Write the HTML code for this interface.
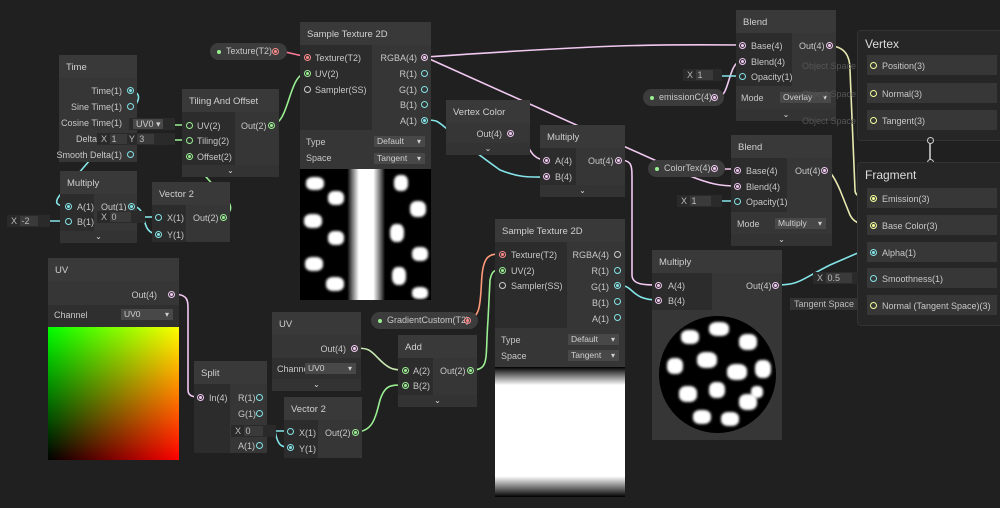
<!DOCTYPE html>
<html><head><meta charset="utf-8"><style>
*{margin:0;padding:0;box-sizing:border-box}
body{width:1000px;height:508px;background:#202020;position:relative;overflow:hidden;font-family:"Liberation Sans",sans-serif;font-size:9px;color:#c8c8c8}
.r{position:absolute}
.h{position:absolute;background:#393939;color:#d0d0d0;font-size:9.5px;padding:7px 0 0 7px;height:23px}
.b{position:absolute;background:#2c2c2c}
.o{position:absolute;background:#363636}
.t{position:absolute;white-space:nowrap;line-height:10px}
.p{position:absolute;width:7px;height:7px;border-radius:50%;border:1px solid #8ad;}
.p.f::after{content:"";position:absolute;left:1px;top:1px;width:3px;height:3px;border-radius:50%;background:currentColor}
.c{border-color:#84e4e7;color:#84e4e7}.g{border-color:#9aef92;color:#9aef92}.v{border-color:#f0c8f0;color:#f0c8f0}.y{border-color:#f6ff9a;color:#f6ff9a}.rd{border-color:#ff8b8b;color:#ff8b8b}.w{border-color:#ccc;color:#ccc}
.fld{position:absolute;background:#2a2a2a;height:12px;font-size:9px;line-height:12px;padding-left:4px;color:#bbb}
.in{position:absolute;background:#3c3c3c;height:10px;line-height:10px;padding-left:3px;color:#ccc}
.dd{position:absolute;background:#484848;height:11px;line-height:11px;padding-left:3px;color:#d0d0d0;font-size:8.5px}
.dd::after{content:"▾";position:absolute;right:4px;top:0;font-size:8px}
.pill{position:absolute;background:#3c3c3c;border-radius:9px;height:17px;line-height:17px;padding-left:16px;color:#c8c8c8}
.pill::before{content:"";position:absolute;left:7px;top:7px;width:4px;height:4px;border-radius:50%;background:#9aef92}
.chev{position:absolute;background:#333;height:12px;text-align:center;font-size:8px;line-height:12px;color:#ddd}
.blk{position:absolute;background:#262626;border:1px solid #333;border-radius:4px}
.row{position:absolute;background:#373737;height:20px}
.s{position:absolute;background:#fff;border-radius:40%;filter:blur(1.2px)}
</style></head><body>

<svg class="r" style="left:0;top:0" width="1000" height="508" fill="none" stroke-width="1.6">
<path d="M281 51 L307 57" stroke="#ff7a9a"/>
<path d="M271 125 C290 125 288 73 307 73" stroke="#9aef92"/>
<path d="M130 90 C150 95 130 110 120 125 L60 195 C52 205 60 206 68 206" stroke="#84e4e7"/>
<path d="M131 206 C150 206 138 234 158 234" stroke="#84e4e7"/>
<path d="M50 221 L68 221" stroke="#84e4e7"/>
<path d="M145 217 L158 217" stroke="#84e4e7"/>
<path d="M224 217 C240 205 225 200 200 170 C185 160 183 156 189 156" stroke="#9aef92"/>
<path d="M172 125 L189 125 M172 140 L189 140" stroke="#9aef92"/>
<path d="M425 57 C600 45 650 44 742 45" stroke="#f0c8f0"/>
<path d="M425 57 L690 176 C710 184 720 186 737 186" stroke="#f0c8f0"/>
<path d="M425 120 C445 120 430 120 500 170 C520 178 530 177 546 177" stroke="#84e4e7"/>
<path d="M512 133 C530 133 525 160 546 160" stroke="#f0c8f0"/>
<path d="M619 160 C632 160 632 165 632 180 L632 275 C632 285 645 285 658 285" stroke="#f0c8f0"/>
<path d="M718 97 C730 97 728 61 742 61" stroke="#f0c8f0"/>
<path d="M722 76 L742 76 M722 201 L737 201" stroke="#84e4e7"/>
<path d="M720 169 L737 169" stroke="#f0c8f0"/>
<path d="M822 45 C840 45 850 50 850 70 L855 190 C855 198 865 198 873 198" stroke="#e8e8b0"/>
<path d="M818 170 C830 170 832 172 840 190 L850 215 C855 225 865 225 873 225" stroke="#e8e8b0"/>
<path d="M776 285 C800 285 800 280 830 265 L860 252 L873 252" stroke="#84e4e7"/>
<path d="M618 285 C635 285 630 300 658 300" stroke="#84e4e7"/>
<path d="M172 294 C188 294 188 300 188 310 L188 390 C188 397 195 397 200 397" stroke="#f0c8f0"/>
<path d="M354 348 C370 348 370 350 380 360 C390 370 395 370 405 370" stroke="#c8e8b0"/>
<path d="M355 432 C372 432 375 420 380 400 C385 385 390 385 405 385" stroke="#9aef92"/>
<path d="M471 370 C490 370 485 360 488 320 L490 280 C492 270 495 270 501 270" stroke="#9aef92"/>
<path d="M467 320 C482 318 480 300 482 275 C484 255 490 254 501 254" stroke="#ff9a7a"/>
<path d="M275 431 L290 431 M275 431 C278 447 282 447 290 447" stroke="#84e4e7"/>
<path d="M858 66 L873 66 M858 93 L873 93 M858 120 L873 120 M858 278 L873 278 M858 305 L873 305" stroke="#f6ff9a"/>
<path d="M930 143 L930 160" stroke="#ccc"/>
</svg>

<!-- Time -->
<div class="h" style="left:59px;top:55px;width:78px">Time</div>
<div class="o" style="left:59px;top:78px;width:78px;height:84px"></div>
<div class="t" style="right:878px;top:86px">Time(1)</div><div class="p c f" style="left:127px;top:87px"></div>
<div class="t" style="right:878px;top:102px">Sine Time(1)</div><div class="p c" style="left:127px;top:103px"></div>
<div class="t" style="right:878px;top:118px">Cosine Time(1)</div>
<div class="t" style="right:903px;top:134px">Delta</div>
<div class="t" style="right:878px;top:150px">Smooth Delta(1)</div><div class="p c" style="left:127px;top:151px"></div>
<div class="fld" style="left:129px;top:118px;width:46px"><span class="in" style="position:static;display:inline-block;width:30px;background:#484848">UV0 ▾</span></div>
<div class="fld" style="left:97px;top:133px;width:78px">X <span style="background:#3a3a3a;padding:0 10px 0 2px">1</span> Y <span style="background:#3a3a3a;padding:0 10px 0 2px">3</span></div>

<!-- Tiling -->
<div class="h" style="left:182px;top:89px;width:97px">Tiling And Offset</div>
<div class="b" style="left:182px;top:112px;width:53px;height:53px"></div>
<div class="o" style="left:235px;top:112px;width:44px;height:53px"></div>
<div class="chev" style="left:182px;top:165px;width:97px">⌄</div>
<div class="p g" style="left:186px;top:122px"></div><div class="t" style="left:197px;top:121px">UV(2)</div>
<div class="p g" style="left:186px;top:137px"></div><div class="t" style="left:197px;top:136px">Tiling(2)</div>
<div class="p g f" style="left:186px;top:153px"></div><div class="t" style="left:197px;top:152px">Offset(2)</div>
<div class="t" style="left:241px;top:121px">Out(2)</div><div class="p g f" style="left:268px;top:122px"></div>

<div class="pill" style="left:210px;top:43px;width:77px">Texture(T2)</div><div class="p rd f" style="left:272px;top:48px"></div>

<!-- Sample Texture top -->
<div class="h" style="left:300px;top:22px;width:131px">Sample Texture 2D</div>
<div class="b" style="left:300px;top:45px;width:72px;height:85px"></div>
<div class="o" style="left:372px;top:45px;width:59px;height:85px"></div>
<div class="p rd f" style="left:304px;top:54px"></div><div class="t" style="left:315px;top:53px">Texture(T2)</div>
<div class="p g f" style="left:304px;top:70px"></div><div class="t" style="left:315px;top:69px">UV(2)</div>
<div class="p w" style="left:304px;top:86px"></div><div class="t" style="left:315px;top:85px">Sampler(SS)</div>
<div class="t" style="right:583px;top:53px">RGBA(4)</div><div class="p v f" style="left:421px;top:54px"></div>
<div class="t" style="right:583px;top:69px">R(1)</div><div class="p c" style="left:421px;top:70px"></div>
<div class="t" style="right:583px;top:85px">G(1)</div><div class="p c" style="left:421px;top:86px"></div>
<div class="t" style="right:583px;top:100px">B(1)</div><div class="p c" style="left:421px;top:101px"></div>
<div class="t" style="right:583px;top:116px">A(1)</div><div class="p c f" style="left:421px;top:117px"></div>
<div class="o" style="left:300px;top:130px;width:131px;height:39px"></div>
<div class="t" style="left:306px;top:137px">Type</div><div class="dd" style="left:374px;top:136px;width:51px">Default</div>
<div class="t" style="left:306px;top:153px">Space</div><div class="dd" style="left:374px;top:153px;width:51px">Tangent</div>
<div class="r" style="left:300px;top:169px;width:131px;height:131px;background:#000;overflow:hidden">
<div class="r" style="left:0;top:0;width:131px;height:131px;background:linear-gradient(to right,transparent 36%,#777 40%,#fff 45%,#fff 56%,#777 61%,transparent 65%)"></div>
<div class="s" style="left:6px;top:8px;width:18px;height:13px"></div>
<div class="s" style="left:28px;top:22px;width:16px;height:14px"></div>
<div class="s" style="left:4px;top:45px;width:18px;height:14px"></div>
<div class="s" style="left:28px;top:62px;width:16px;height:14px"></div>
<div class="s" style="left:5px;top:88px;width:18px;height:14px"></div>
<div class="s" style="left:26px;top:108px;width:18px;height:14px"></div>
<div class="s" style="left:94px;top:6px;width:14px;height:16px"></div>
<div class="s" style="left:110px;top:32px;width:16px;height:16px"></div>
<div class="s" style="left:90px;top:55px;width:14px;height:18px"></div>
<div class="s" style="left:112px;top:78px;width:16px;height:14px"></div>
<div class="s" style="left:92px;top:98px;width:14px;height:18px"></div>
<div class="s" style="left:112px;top:118px;width:16px;height:12px"></div>
</div>

<!-- Multiply small -->
<div class="h" style="left:60px;top:171px;width:77px">Multiply</div>
<div class="b" style="left:60px;top:194px;width:34px;height:37px"></div>
<div class="o" style="left:94px;top:194px;width:43px;height:37px"></div>
<div class="chev" style="left:60px;top:231px;width:77px">⌄</div>
<div class="p c f" style="left:65px;top:203px"></div><div class="t" style="left:77px;top:202px">A(1)</div>
<div class="p c" style="left:65px;top:218px"></div><div class="t" style="left:77px;top:217px">B(1)</div>
<div class="t" style="left:101px;top:202px">Out(1)</div><div class="p c f" style="left:128px;top:203px"></div>
<div class="fld" style="left:97px;top:211px;width:48px">X <span style="background:#3a3a3a;padding:0 14px 0 2px">0</span></div>
<div class="fld" style="left:7px;top:215px;width:43px">X <span style="background:#3a3a3a;padding:0 8px 0 2px">-2</span></div>

<!-- Vector2 -->
<div class="h" style="left:152px;top:182px;width:78px">Vector 2</div>
<div class="b" style="left:152px;top:205px;width:34px;height:37px"></div>
<div class="o" style="left:186px;top:205px;width:44px;height:37px"></div>
<div class="p c" style="left:155px;top:214px"></div><div class="t" style="left:167px;top:213px">X(1)</div>
<div class="p c f" style="left:155px;top:231px"></div><div class="t" style="left:167px;top:230px">Y(1)</div>
<div class="t" style="left:193px;top:213px">Out(2)</div><div class="p g f" style="left:220px;top:214px"></div>

<!-- Vertex Color -->
<div class="h" style="left:446px;top:100px;width:84px">Vertex Color</div>
<div class="o" style="left:446px;top:123px;width:84px;height:20px"></div>
<div class="chev" style="left:446px;top:143px;width:84px">⌄</div>
<div class="t" style="right:498px;top:129px">Out(4)</div><div class="p v f" style="left:507px;top:130px"></div>

<!-- Multiply mid -->
<div class="h" style="left:540px;top:125px;width:85px">Multiply</div>
<div class="b" style="left:540px;top:148px;width:36px;height:37px"></div>
<div class="o" style="left:576px;top:148px;width:49px;height:37px"></div>
<div class="chev" style="left:540px;top:185px;width:85px">⌄</div>
<div class="p v f" style="left:543px;top:157px"></div><div class="t" style="left:555px;top:156px">A(4)</div>
<div class="p v f" style="left:543px;top:173px"></div><div class="t" style="left:555px;top:172px">B(4)</div>
<div class="t" style="left:588px;top:156px">Out(4)</div><div class="p v f" style="left:615px;top:157px"></div>

<!-- Blend top -->
<div class="h" style="left:736px;top:10px;width:100px">Blend</div>
<div class="b" style="left:736px;top:33px;width:56px;height:53px"></div>
<div class="o" style="left:792px;top:33px;width:44px;height:53px"></div>
<div class="o" style="left:736px;top:86px;width:100px;height:23px"></div>
<div class="chev" style="left:736px;top:109px;width:100px">⌄</div>
<div class="p v f" style="left:739px;top:42px"></div><div class="t" style="left:751px;top:41px">Base(4)</div>
<div class="p v f" style="left:739px;top:58px"></div><div class="t" style="left:751px;top:57px">Blend(4)</div>
<div class="p c" style="left:739px;top:73px"></div><div class="t" style="left:751px;top:72px">Opacity(1)</div>
<div class="t" style="left:799px;top:41px">Out(4)</div><div class="p v f" style="left:826px;top:42px"></div>
<div class="t" style="left:741px;top:93px">Mode</div><div class="dd" style="left:780px;top:92px;width:51px">Overlay</div>
<div class="fld" style="left:683px;top:69px;width:39px">X <span style="background:#3a3a3a;padding:0 10px 0 2px">1</span></div>
<div class="pill" style="left:643px;top:89px;width:81px">emissionC(4)</div><div class="p v f" style="left:711px;top:94px"></div>

<!-- Blend 2 -->
<div class="h" style="left:731px;top:135px;width:101px">Blend</div>
<div class="b" style="left:731px;top:158px;width:56px;height:54px"></div>
<div class="o" style="left:787px;top:158px;width:45px;height:54px"></div>
<div class="o" style="left:731px;top:212px;width:101px;height:22px"></div>
<div class="chev" style="left:731px;top:234px;width:101px">⌄</div>
<div class="p v f" style="left:734px;top:167px"></div><div class="t" style="left:746px;top:166px">Base(4)</div>
<div class="p v f" style="left:734px;top:183px"></div><div class="t" style="left:746px;top:182px">Blend(4)</div>
<div class="p c" style="left:734px;top:198px"></div><div class="t" style="left:746px;top:197px">Opacity(1)</div>
<div class="t" style="left:795px;top:166px">Out(4)</div><div class="p v f" style="left:821px;top:167px"></div>
<div class="t" style="left:737px;top:219px">Mode</div><div class="dd" style="left:775px;top:218px;width:51px">Multiply</div>
<div class="fld" style="left:677px;top:195px;width:45px">X <span style="background:#3a3a3a;padding:0 14px 0 2px">1</span></div>
<div class="pill" style="left:648px;top:160px;width:77px">ColorTex(4)</div><div class="p v f" style="left:711px;top:165px"></div>

<!-- Master stack -->
<div class="blk" style="left:857px;top:30px;width:150px;height:111px"></div>
<div class="t" style="left:865px;top:39px;font-size:12px;color:#ddd">Vertex</div>
<div class="row" style="left:867px;top:55px;width:130px"></div><div class="t" style="left:882px;top:61px">Position(3)</div><div class="p y" style="left:870px;top:62px"></div>
<div class="row" style="left:867px;top:83px;width:130px"></div><div class="t" style="left:882px;top:89px">Normal(3)</div><div class="p y" style="left:870px;top:90px"></div>
<div class="row" style="left:867px;top:110px;width:130px"></div><div class="t" style="left:882px;top:116px">Tangent(3)</div><div class="p y" style="left:870px;top:117px"></div>
<div class="t" style="left:802px;top:61px;color:#555">Object Space</div>
<div class="t" style="left:802px;top:89px;color:#555">Object Space</div>
<div class="t" style="left:802px;top:116px;color:#555">Object Space</div>
<div class="p w" style="left:927px;top:137px"></div><div class="p w" style="left:927px;top:159px"></div>
<div class="blk" style="left:857px;top:162px;width:150px;height:164px"></div>
<div class="t" style="left:865px;top:170px;font-size:12px;color:#ddd">Fragment</div>
<div class="row" style="left:867px;top:188px;width:130px"></div><div class="t" style="left:882px;top:194px">Emission(3)</div><div class="p y f" style="left:870px;top:195px"></div>
<div class="row" style="left:867px;top:215px;width:130px"></div><div class="t" style="left:882px;top:221px">Base Color(3)</div><div class="p y f" style="left:870px;top:222px"></div>
<div class="row" style="left:867px;top:242px;width:130px"></div><div class="t" style="left:882px;top:248px">Alpha(1)</div><div class="p c f" style="left:870px;top:249px"></div>
<div class="row" style="left:867px;top:268px;width:130px"></div><div class="t" style="left:882px;top:274px">Smoothness(1)</div><div class="p c" style="left:870px;top:275px"></div>
<div class="row" style="left:867px;top:295px;width:130px"></div><div class="t" style="left:882px;top:301px">Normal (Tangent Space)(3)</div><div class="p y" style="left:870px;top:302px"></div>
<div class="fld" style="left:813px;top:272px;width:45px">X <span style="background:#3a3a3a;padding:0 12px 0 2px">0.5</span></div>
<div class="fld" style="left:790px;top:298px;width:68px;background:#333">Tangent Space</div>

<!-- Multiply big -->
<div class="h" style="left:652px;top:250px;width:130px">Multiply</div>
<div class="b" style="left:652px;top:273px;width:60px;height:37px"></div>
<div class="o" style="left:712px;top:273px;width:70px;height:37px"></div>
<div class="o" style="left:652px;top:310px;width:130px;height:130px"></div>
<div class="p v f" style="left:655px;top:282px"></div><div class="t" style="left:668px;top:281px">A(4)</div>
<div class="p v f" style="left:655px;top:297px"></div><div class="t" style="left:668px;top:296px">B(4)</div>
<div class="t" style="left:746px;top:281px">Out(4)</div><div class="p v f" style="left:772px;top:282px"></div>
<div class="r" style="left:659px;top:316px;width:117px;height:117px;border-radius:50%;background:#000;overflow:hidden">
<div class="s" style="left:22px;top:14px;width:18px;height:14px"></div>
<div class="s" style="left:50px;top:6px;width:20px;height:14px"></div>
<div class="s" style="left:80px;top:18px;width:18px;height:16px"></div>
<div class="s" style="left:8px;top:42px;width:16px;height:16px"></div>
<div class="s" style="left:38px;top:36px;width:20px;height:16px"></div>
<div class="s" style="left:68px;top:48px;width:20px;height:16px"></div>
<div class="s" style="left:96px;top:44px;width:16px;height:18px"></div>
<div class="s" style="left:20px;top:70px;width:18px;height:16px"></div>
<div class="s" style="left:50px;top:66px;width:16px;height:16px"></div>
<div class="s" style="left:80px;top:78px;width:18px;height:16px"></div>
<div class="s" style="left:34px;top:94px;width:18px;height:14px"></div>
<div class="s" style="left:62px;top:96px;width:18px;height:14px"></div>
<div class="s" style="left:92px;top:70px;width:12px;height:12px"></div>
</div>

<!-- UV big -->
<div class="h" style="left:48px;top:258px;width:131px">UV</div>
<div class="o" style="left:48px;top:281px;width:131px;height:24px"></div>
<div class="t" style="right:843px;top:290px">Out(4)</div><div class="p v f" style="left:168px;top:291px"></div>
<div class="o" style="left:48px;top:305px;width:131px;height:22px;background:#2f2f2f"></div>
<div class="t" style="left:54px;top:310px">Channel</div><div class="dd" style="left:121px;top:309px;width:52px">UV0</div>
<div class="r" style="left:48px;top:327px;width:131px;height:133px;background:linear-gradient(to right,#000,#f00),linear-gradient(to bottom,#0f0,#000);background-blend-mode:screen"></div>

<!-- Split -->
<div class="h" style="left:194px;top:361px;width:73px">Split</div>
<div class="b" style="left:194px;top:384px;width:36px;height:69px"></div>
<div class="o" style="left:230px;top:384px;width:37px;height:69px"></div>
<div class="p v f" style="left:197px;top:394px"></div><div class="t" style="left:209px;top:393px">In(4)</div>
<div class="t" style="left:238px;top:393px">R(1)</div><div class="p c" style="left:256px;top:394px"></div>
<div class="t" style="left:238px;top:409px">G(1)</div><div class="p c" style="left:256px;top:410px"></div>
<div class="t" style="left:238px;top:441px">A(1)</div><div class="p c" style="left:256px;top:442px"></div>
<div class="fld" style="left:231px;top:425px;width:45px">X <span style="background:#3a3a3a;padding:0 12px 0 2px">0</span></div>

<!-- UV small -->
<div class="h" style="left:272px;top:312px;width:89px">UV</div>
<div class="o" style="left:272px;top:335px;width:89px;height:23px"></div>
<div class="t" style="right:654px;top:344px">Out(4)</div><div class="p v f" style="left:351px;top:345px"></div>
<div class="o" style="left:272px;top:358px;width:89px;height:21px;background:#2f2f2f"></div>
<div class="t" style="left:277px;top:364px">Channe</div><div class="dd" style="left:305px;top:363px;width:51px">UV0</div>
<div class="chev" style="left:272px;top:379px;width:89px">⌄</div>

<!-- Vector2 small -->
<div class="h" style="left:284px;top:397px;width:78px">Vector 2</div>
<div class="b" style="left:284px;top:420px;width:34px;height:38px"></div>
<div class="o" style="left:318px;top:420px;width:44px;height:38px"></div>
<div class="p c" style="left:287px;top:428px"></div><div class="t" style="left:299px;top:428px">X(1)</div>
<div class="p c f" style="left:287px;top:444px"></div><div class="t" style="left:299px;top:444px">Y(1)</div>
<div class="t" style="left:325px;top:428px">Out(2)</div><div class="p g f" style="left:352px;top:429px"></div>

<!-- Add -->
<div class="h" style="left:398px;top:335px;width:79px">Add</div>
<div class="b" style="left:398px;top:358px;width:35px;height:37px"></div>
<div class="o" style="left:433px;top:358px;width:44px;height:37px"></div>
<div class="chev" style="left:398px;top:395px;width:79px">⌄</div>
<div class="p g f" style="left:402px;top:367px"></div><div class="t" style="left:413px;top:366px">A(2)</div>
<div class="p g f" style="left:402px;top:382px"></div><div class="t" style="left:413px;top:381px">B(2)</div>
<div class="t" style="left:440px;top:366px">Out(2)</div><div class="p g f" style="left:467px;top:367px"></div>
<div class="pill" style="left:371px;top:312px;width:107px">GradientCustom(T2)</div><div class="p rd f" style="left:464px;top:317px"></div>

<!-- Sample Texture bottom -->
<div class="h" style="left:495px;top:219px;width:130px">Sample Texture 2D</div>
<div class="b" style="left:495px;top:242px;width:72px;height:86px"></div>
<div class="o" style="left:567px;top:242px;width:58px;height:86px"></div>
<div class="p rd f" style="left:499px;top:251px"></div><div class="t" style="left:511px;top:250px">Texture(T2)</div>
<div class="p g f" style="left:499px;top:267px"></div><div class="t" style="left:511px;top:266px">UV(2)</div>
<div class="p w" style="left:499px;top:282px"></div><div class="t" style="left:511px;top:281px">Sampler(SS)</div>
<div class="t" style="right:391px;top:250px">RGBA(4)</div><div class="p w" style="left:614px;top:251px"></div>
<div class="t" style="right:391px;top:266px">R(1)</div><div class="p c" style="left:614px;top:267px"></div>
<div class="t" style="right:391px;top:282px">G(1)</div><div class="p c f" style="left:614px;top:282px"></div>
<div class="t" style="right:391px;top:298px">B(1)</div><div class="p c" style="left:614px;top:298px"></div>
<div class="t" style="right:391px;top:314px">A(1)</div><div class="p c" style="left:614px;top:314px"></div>
<div class="o" style="left:495px;top:328px;width:130px;height:39px"></div>
<div class="t" style="left:501px;top:335px">Type</div><div class="dd" style="left:568px;top:334px;width:51px">Default</div>
<div class="t" style="left:501px;top:351px">Space</div><div class="dd" style="left:568px;top:350px;width:51px">Tangent</div>
<div class="r" style="left:495px;top:367px;width:130px;height:130px;background:linear-gradient(#000 0,#fff 14%,#fff 84%,#000 100%)"></div>

</body></html>
